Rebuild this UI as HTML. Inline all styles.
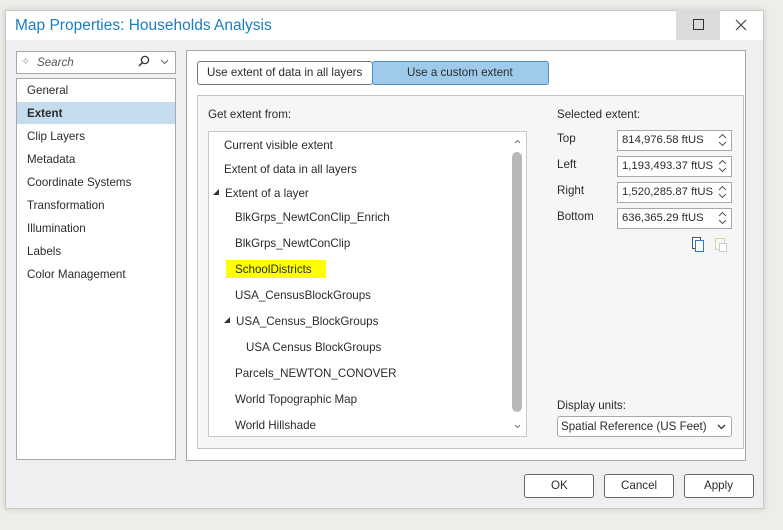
<!DOCTYPE html>
<html><head><style>
*{box-sizing:border-box;margin:0;padding:0}
body{width:783px;height:530px;background:#efede8;font-family:"Liberation Sans",sans-serif;font-size:11.6px;color:#2b2b2b;position:relative;overflow:hidden}
.a{position:absolute}
.t{position:absolute;white-space:nowrap}
.sp{position:absolute;width:9px;height:14px}
</style></head><body>
<div class="a" style="left:5px;top:10px;width:759px;height:499px;background:#eeeff1;border:1px solid #c9c9c9;box-shadow:0 0 6px rgba(0,0,0,.15)"></div>
<div class="a" style="left:6px;top:11px;width:757px;height:29px;background:#fff"></div>
<div class="t" style="left:15px;top:17px;font-size:15.5px;color:#1a7fc1">Map Properties: Households Analysis</div>
<div class="a" style="left:676px;top:10px;width:44px;height:30px;background:#dcdcde"></div>
<div class="a" style="left:693px;top:19px;width:11px;height:11px;border:1px solid #333"></div>
<svg class="a" style="left:735px;top:19px" width="12" height="12"><path d="M1 1L11 11M11 1L1 11" stroke="#444" stroke-width="1.2"/></svg>

<div class="a" style="left:16px;top:51px;width:160px;height:23px;background:#fff;border:1px solid #a8a8a8"></div>
<div class="t" style="left:21px;top:55px;color:#999;font-size:11px">✧</div>
<div class="t" style="left:37px;top:56px;font-style:italic;color:#555">Search</div>
<svg class="a" style="left:138px;top:55px" width="12" height="12"><circle cx="7" cy="5" r="3.6" fill="none" stroke="#333" stroke-width="1.3"/><path d="M4.3 7.7L1 11" stroke="#333" stroke-width="1.5"/></svg>
<svg class="a" style="left:160px;top:59px" width="9" height="6"><path d="M1 1L4.5 4.5L8 1" fill="none" stroke="#666"/></svg>
<div class="a" style="left:16px;top:78px;width:160px;height:382px;background:#fff;border:1px solid #a8a8a8"></div>
<div class="a" style="left:17px;top:102px;width:158px;height:22px;background:#c5dcef"></div>
<div class="t" style="left:27px;top:84px">General</div>
<div class="t" style="left:27px;top:107px;font-weight:bold">Extent</div>
<div class="t" style="left:27px;top:130px">Clip Layers</div>
<div class="t" style="left:27px;top:153px">Metadata</div>
<div class="t" style="left:27px;top:176px">Coordinate Systems</div>
<div class="t" style="left:27px;top:199px">Transformation</div>
<div class="t" style="left:27px;top:222px">Illumination</div>
<div class="t" style="left:27px;top:245px">Labels</div>
<div class="t" style="left:27px;top:268px">Color Management</div>

<div class="a" style="left:186px;top:50px;width:560px;height:411px;background:#fff;border:1px solid #a8a8a8"></div>
<div class="a" style="left:197px;top:61px;width:176px;height:24px;background:#fff;border:1px solid #777;border-radius:3px"></div>
<div class="t" style="left:207px;top:66px">Use extent of data in all layers</div>
<div class="a" style="left:372px;top:61px;width:177px;height:24px;background:#9ecbeb;border:1px solid #4b8fc4;border-radius:3px"></div>
<div class="t" style="left:407px;top:66px">Use a custom extent</div>

<div class="a" style="left:197px;top:95px;width:547px;height:354px;background:#f5f6f6;border:1px solid #c4c4c4"></div>
<div class="t" style="left:208px;top:108px">Get extent from:</div>
<div class="a" style="left:208px;top:131px;width:319px;height:306px;background:#fff;border:1px solid #c8c8c8"></div>
<div class="a" style="left:512px;top:152px;width:10px;height:260px;background:#b8b8b8;border-radius:5px"></div>
<svg class="a" style="left:514px;top:139px" width="7" height="5"><path d="M1 4L3.5 1.5L6 4" fill="none" stroke="#777"/></svg>
<svg class="a" style="left:514px;top:424px" width="7" height="5"><path d="M1 1L3.5 3.5L6 1" fill="none" stroke="#777"/></svg>
<div class="a" style="left:226px;top:260px;width:100px;height:18px;background:#ffff00"></div>
<div class="t" style="left:224px;top:139px">Current visible extent</div>
<div class="t" style="left:224px;top:163px">Extent of data in all layers</div>
<svg class="a" style="left:213px;top:189px" width="7" height="7"><path d="M6 0V6H0Z" fill="#333"/></svg>
<div class="t" style="left:225px;top:187px">Extent of a layer</div>
<div class="t" style="left:235px;top:211px">BlkGrps_NewtConClip_Enrich</div>
<div class="t" style="left:235px;top:237px">BlkGrps_NewtConClip</div>
<div class="t" style="left:235px;top:263px">SchoolDistricts</div>
<div class="t" style="left:235px;top:289px">USA_CensusBlockGroups</div>
<svg class="a" style="left:224px;top:317px" width="7" height="7"><path d="M6 0V6H0Z" fill="#333"/></svg>
<div class="t" style="left:236px;top:315px">USA_Census_BlockGroups</div>
<div class="t" style="left:246px;top:341px">USA Census BlockGroups</div>
<div class="t" style="left:235px;top:367px">Parcels_NEWTON_CONOVER</div>
<div class="t" style="left:235px;top:393px">World Topographic Map</div>
<div class="t" style="left:235px;top:419px">World Hillshade</div>

<div class="t" style="left:557px;top:108px">Selected extent:</div>
<div class="t" style="left:557px;top:132px">Top</div>
<div class="t" style="left:557px;top:158px">Left</div>
<div class="t" style="left:557px;top:184px">Right</div>
<div class="t" style="left:557px;top:210px">Bottom</div>
<div class="a" style="left:617px;top:130px;width:115px;height:21px;background:#fff;border:1px solid #a8a8a8"></div>
<div class="a" style="left:617px;top:156px;width:115px;height:21px;background:#fff;border:1px solid #a8a8a8"></div>
<div class="a" style="left:617px;top:182px;width:115px;height:21px;background:#fff;border:1px solid #a8a8a8"></div>
<div class="a" style="left:617px;top:208px;width:115px;height:21px;background:#fff;border:1px solid #a8a8a8"></div>
<div class="t" style="left:622px;top:134px;font-size:11.3px">814,976.58 ftUS</div>
<div class="t" style="left:622px;top:160px;font-size:11.3px">1,193,493.37 ftUS</div>
<div class="t" style="left:622px;top:186px;font-size:11.3px">1,520,285.87 ftUS</div>
<div class="t" style="left:622px;top:212px;font-size:11.3px">636,365.29 ftUS</div>
<svg class="sp" style="left:718px;top:133px"><path d="M1 5L4.5 1.5L8 5M1 9L4.5 12.5L8 9" fill="none" stroke="#555"/></svg>
<svg class="sp" style="left:718px;top:159px"><path d="M1 5L4.5 1.5L8 5M1 9L4.5 12.5L8 9" fill="none" stroke="#555"/></svg>
<svg class="sp" style="left:718px;top:185px"><path d="M1 5L4.5 1.5L8 5M1 9L4.5 12.5L8 9" fill="none" stroke="#555"/></svg>
<svg class="sp" style="left:718px;top:211px"><path d="M1 5L4.5 1.5L8 5M1 9L4.5 12.5L8 9" fill="none" stroke="#555"/></svg>
<div class="a" style="left:692px;top:237px;width:9px;height:12px;border:1px solid #555;background:#fff"></div>
<div class="a" style="left:695px;top:240px;width:9px;height:12px;border:1px solid #2a7ac0;background:#fff"></div>
<div class="a" style="left:715px;top:238px;width:10px;height:12px;border:1px solid #e8cfa8"></div>
<div class="a" style="left:719px;top:243px;width:8px;height:9px;border:1px solid #ccc;background:#fff"></div>

<div class="t" style="left:557px;top:399px">Display units:</div>
<div class="a" style="left:557px;top:416px;width:175px;height:21px;background:#fff;border:1px solid #a8a8a8;border-radius:3px"></div>
<div class="t" style="left:561px;top:420px">Spatial Reference (US Feet)</div>
<svg class="a" style="left:717px;top:424px" width="9" height="6"><path d="M1 1L4.5 4.5L8 1" fill="none" stroke="#333" stroke-width="1.3"/></svg>

<div class="a" style="left:524px;top:474px;width:70px;height:24px;border:1px solid #666;border-radius:3px;background:#fff"></div>
<div class="t" style="left:551px;top:479px">OK</div>
<div class="a" style="left:604px;top:474px;width:70px;height:24px;border:1px solid #666;border-radius:3px;background:#fff"></div>
<div class="t" style="left:621px;top:479px">Cancel</div>
<div class="a" style="left:684px;top:474px;width:70px;height:24px;border:1px solid #666;border-radius:3px;background:#fff"></div>
<div class="t" style="left:704px;top:479px">Apply</div>
</body></html>
